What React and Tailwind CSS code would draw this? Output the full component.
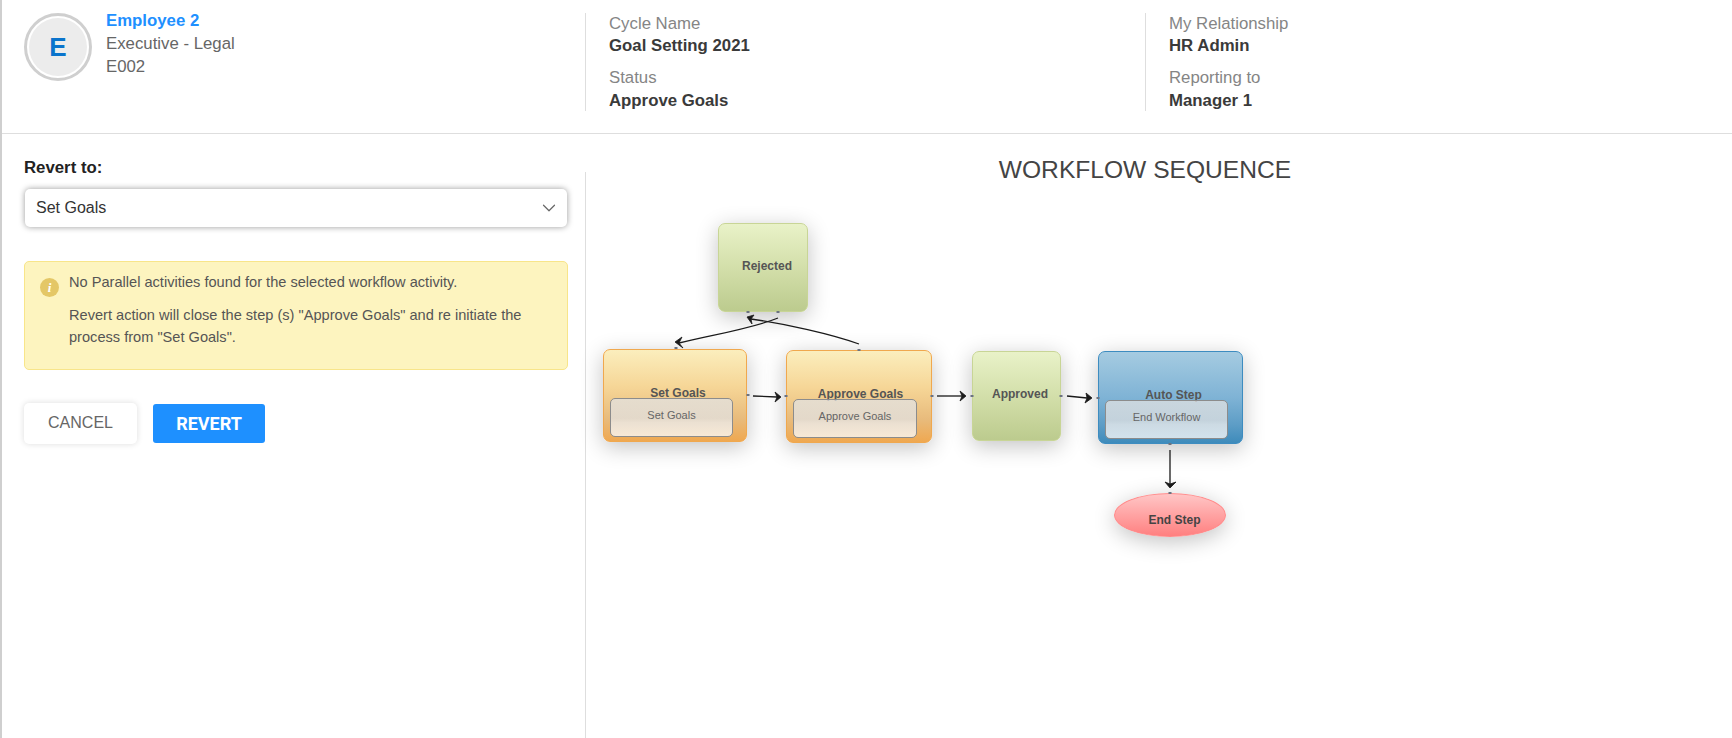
import { ChevronDown } from 'lucide-react'

const ORANGE = 'border-[#f0a84e] bg-[linear-gradient(180deg,#fbeebd_0%,#f6d697_40%,#e8bb7c_75%,#efa851_100%)]'
const GREEN = 'border-[#c8d596] bg-[linear-gradient(180deg,#e9f2c8_0%,#d3dfaa_50%,#bccb8e_100%)]'
const BLUE = 'border-[#3d8cc0] bg-[linear-gradient(180deg,#a5cbe1_0%,#7fb3d5_50%,#5d9dc6_80%,#3e8bbb_100%)]'

// jsPlumb style arrow head: tip first, notched at the back
function Arrow({ from, to, d, head }) {
  return (
    <g>
      <path d={d || `M${from[0]} ${from[1]} L${to[0]} ${to[1]}`} fill="none" stroke="#1a1a1a" strokeWidth="1.3" />
      <polygon points={head} fill="#1a1a1a" stroke="#1a1a1a" strokeWidth="0.8" />
    </g>
  )
}

function Dot({ x, y }) {
  return <rect x={x - 1.5} y={y - 1} width="3" height="2" fill="#6b7280" />
}

function Field({ label, value, className, valueClass }) {
  return (
    <div className={className}>
      <div className="text-[16.8px] leading-[20px] text-[#858585]">{label}</div>
      <div className={`text-[16.8px] font-bold text-[#3a3a3a] ${valueClass}`}>{value}</div>
    </div>
  )
}

function Step({ pos, color, label, labelPos, inner, innerPos }) {
  return (
    <div className={`absolute rounded-[7px] border shadow-[0_5px_22px_rgba(0,0,0,0.24)] ${pos} ${color}`}>
      <div className={`text-center text-[12px] leading-[14px] font-bold text-[#555] ${labelPos}`}>{label}</div>
      {inner && (
        <div className={`absolute flex items-center justify-center pb-[5px] rounded-[5px] border border-[#8c8c8c] text-[11px] text-[#666] bg-[linear-gradient(180deg,rgba(226,226,226,0.76)_0%,rgba(226,226,226,0.76)_52%,rgba(236,236,236,0.78)_64%,rgba(250,250,250,0.78)_100%)] ${innerPos}`}>
          {inner}
        </div>
      )}
    </div>
  )
}

export default function App() {
  return (
    <div className="w-[1732px] h-[738px] overflow-hidden bg-white border-l-2 border-[#cfcfcf] font-['Liberation_Sans',Arial,sans-serif]">
      {/* Header */}
      <div className="flex h-[134px] border-b border-[#dedede] pt-[13px]">
        <div className="w-[584px] h-[98px] flex border-r border-[#dedede] pl-[22px]">
          <div className="w-[68px] h-[68px] rounded-full border-[3px] border-[#cfcfcf] p-[2px] bg-white">
            <div className="w-full h-full rounded-full bg-[#ececec] flex items-center justify-center text-[26px] font-bold text-[#0a74cc]">E</div>
          </div>
          <div className="ml-[14px] -mt-[3px] text-[16.8px] leading-[23px] text-[#666]">
            <div className="font-bold leading-[22px] text-[#1e90ff]">Employee 2</div>
            <div>Executive - Legal</div>
            <div>E002</div>
          </div>
        </div>
        <div className="w-[560px] h-[98px] border-r border-[#dedede] pl-[23px] pt-[1px]">
          <Field label="Cycle Name" value="Goal Setting 2021" valueClass="leading-[24px]" />
          <Field label="Status" value="Approve Goals" className="mt-[10px]" valueClass="leading-[26px]" />
        </div>
        <div className="flex-1 pl-[23px] pt-[1px]">
          <Field label="My Relationship" value="HR Admin" valueClass="leading-[24px]" />
          <Field label="Reporting to" value="Manager 1" className="mt-[10px]" valueClass="leading-[26px]" />
        </div>
      </div>

      <div className="flex h-[604px]">
        {/* Revert form */}
        <div className="w-[584px] h-full pt-[38px]">
          <div className="h-full flex flex-col border-r border-[#dedede] pl-[22px]">
            <div className="-mt-[14px] text-[16.8px] leading-[20px] font-bold text-[#222]">Revert to:</div>
            <div className="w-[542px] h-[38px] ml-[1px] mt-[11px] flex items-center justify-between pl-[11px] pr-[7px] rounded-[5px] bg-white shadow-[0_0_6px_rgba(0,0,0,0.4)] text-[16px] text-[#333]">
              <span>Set Goals</span>
              <ChevronDown className="w-[22px] h-[22px] text-[#666]" strokeWidth={1.3} />
            </div>
            <div className="w-[544px] h-[109px] mt-[34px] flex rounded-[5px] border border-[#f8e58a] bg-[#fdf4bf] pl-[15px] pt-[9px] text-[14.6px] leading-[22px] text-[#555]">
              <div className="w-[19px] h-[19px] mt-[7px] shrink-0 rounded-full bg-[#e4c766] flex items-center justify-center font-['Liberation_Serif',serif] italic font-bold text-[13px] text-white">i</div>
              <div className="ml-[10px] mr-[30px]">
                <p>No Parallel activities found for the selected workflow activity.</p>
                <p className="mt-[11px]">Revert action will close the step (s) "Approve Goals" and re initiate the process from "Set Goals".</p>
              </div>
            </div>
            <div className="flex items-center gap-[16px] mt-[33px]">
              <button className="w-[113px] h-[41px] pb-[2px] rounded-[5px] bg-white shadow-[0_0_6px_rgba(0,0,0,0.14)] text-[16px] text-[#666]">CANCEL</button>
              <button className="w-[112px] h-[39px] rounded-[3px] bg-[#1e90ff] font-['Roboto',sans-serif] text-[18px] font-bold text-white">REVERT</button>
            </div>
          </div>
        </div>

        {/* Workflow diagram */}
        <div className="flex-1 flex flex-col">
          <div className="h-[66px] pt-[22px] pr-[28px] text-center text-[24.6px] leading-[28px] text-[#444]">WORKFLOW SEQUENCE</div>
          <div className="relative flex-1">
            <Step pos="left-[132px] top-[23px] w-[90px] h-[89px]" color={GREEN} label="Rejected" labelPos="pt-[35px] pl-[8px]" />
            <Step pos="left-[17px] top-[149px] w-[144px] h-[93px]" color={ORANGE} label="Set Goals" labelPos="pt-[36px] pl-[6px]" inner="Set Goals" innerPos="left-[6px] top-[48px] w-[123px] h-[39px]" />
            <Step pos="left-[200px] top-[150px] w-[146px] h-[93px]" color={ORANGE} label="Approve Goals" labelPos="pt-[36px] pl-[3px]" inner="Approve Goals" innerPos="left-[6px] top-[48px] w-[124px] h-[39px]" />
            <Step pos="left-[386px] top-[151px] w-[89px] h-[90px]" color={GREEN} label="Approved" labelPos="pt-[35px] pl-[7px]" />
            <Step pos="left-[512px] top-[151px] w-[145px] h-[93px]" color={BLUE} label="Auto Step" labelPos="pt-[36px] pl-[6px]" inner="End Workflow" innerPos="left-[6px] top-[48px] w-[123px] h-[39px]" />
            <div className="absolute left-[528px] top-[293px] w-[112px] h-[44px] rounded-[50%] border border-[#ff8a8a] bg-[linear-gradient(180deg,#ffc6c6_0%,#ff8080_100%)] shadow-[0_5px_22px_rgba(0,0,0,0.24)] pt-[19px] pl-[9px] text-center text-[12px] leading-[14px] font-bold text-[#444]">End Step</div>

            <svg className="absolute inset-0 w-full h-full pointer-events-none">
              <Arrow d="M192 118 C165 129 125 135 93 143" head="89,142 96,137 93,143 97,148" />
              <Arrow d="M273 144 C245 134 200 124 165 119" head="161,117 168,115 165,119 166,124" />
              <Arrow from={[167, 196]} to={[191, 197]} head="195,197 189,192 191,197 189,202" />
              <Arrow from={[351, 196]} to={[376, 196]} head="380,196 374,191 376,196 374,201" />
              <Arrow from={[481, 196]} to={[501, 198]} head="506,198 500,193 501,198 499,203" />
              <Arrow from={[584, 250]} to={[584, 284]} head="584,288 579,282 584,284 590,282" />
              <Dot x={162} y={112} />
              <Dot x={192} y={112} />
              <Dot x={90} y={148} />
              <Dot x={162} y={195} />
              <Dot x={200} y={196} />
              <Dot x={273} y={150} />
              <Dot x={346} y={196} />
              <Dot x={386} y={196} />
              <Dot x={475} y={196} />
              <Dot x={512} y={198} />
              <Dot x={584} y={244} />
              <Dot x={584} y={293} />
            </svg>
          </div>
        </div>
      </div>
    </div>
  )
}
